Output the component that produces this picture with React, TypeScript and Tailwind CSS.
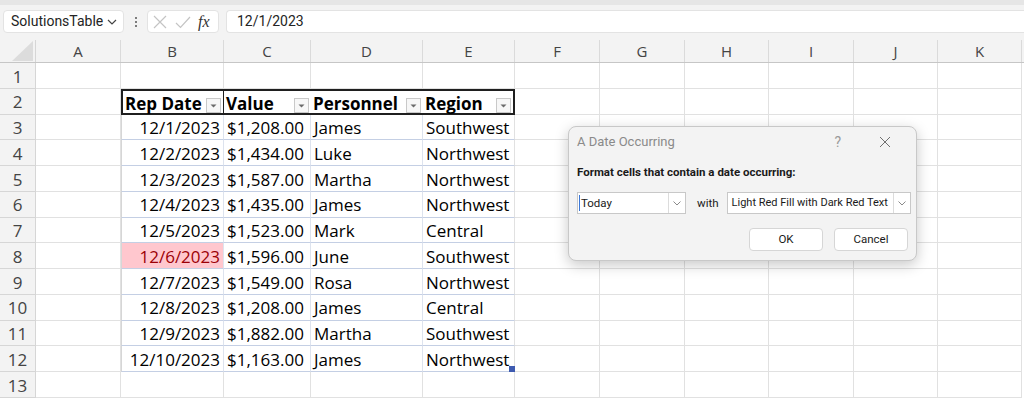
import React from "react";

const cols = [
  { id: "A", w: 85 },
  { id: "B", w: 103 },
  { id: "C", w: 87 },
  { id: "D", w: 112 },
  { id: "E", w: 92 },
  { id: "F", w: 85 },
  { id: "G", w: 85 },
  { id: "H", w: 84 },
  { id: "I", w: 85 },
  { id: "J", w: 84 },
  { id: "K", w: 84 },
];

const rows = [
  ["12/1/2023", "$1,208.00", "James", "Southwest"],
  ["12/2/2023", "$1,434.00", "Luke", "Northwest"],
  ["12/3/2023", "$1,587.00", "Martha", "Northwest"],
  ["12/4/2023", "$1,435.00", "James", "Northwest"],
  ["12/5/2023", "$1,523.00", "Mark", "Central"],
  ["12/6/2023", "$1,596.00", "June", "Southwest"],
  ["12/7/2023", "$1,549.00", "Rosa", "Northwest"],
  ["12/8/2023", "$1,208.00", "James", "Central"],
  ["12/9/2023", "$1,882.00", "Martha", "Southwest"],
  ["12/10/2023", "$1,163.00", "James", "Northwest"],
];

const headers = ["Rep Date", "Value", "Personnel", "Region"];

const cellFont = { fontFamily: '"Open Sans", sans-serif' };

function FilterButton() {
  return (
    <div className="mr-[2px] mt-[4px] flex h-[15px] w-[15px] shrink-0 items-center justify-center border border-[#c9c9c9] bg-[#f7f7f7]">
      <svg width="7" height="4" viewBox="0 0 7 4">
        <path d="M0.5 0.5 L6.5 0.5 L3.5 3.5 Z" fill="#6b6b6b" />
      </svg>
    </div>
  );
}

function Chevron() {
  return (
    <div className="flex h-full w-[17px] shrink-0 items-center justify-center border-l border-[#dcdcdc]">
      <svg width="8" height="5" viewBox="0 0 8 5">
        <path d="M0.5 0.5 L4 4 L7.5 0.5" stroke="#8a8a8a" fill="none" />
      </svg>
    </div>
  );
}

function Dialog() {
  return (
    <div
      className="absolute left-[568px] top-[126px] flex h-[135px] w-[349px] flex-col rounded-[8px] border border-[#c8c8c8] bg-[#f3f3f3] px-[8px] text-[11.5px] text-[#1a1a1a] shadow-[0_4px_14px_rgba(0,0,0,0.22)]"
      style={{ fontFamily: "Roboto, sans-serif" }}
    >
      <div className="flex h-[30px] items-center">
        <span className="text-[13px] text-[#8a8a8a]">A Date Occurring</span>
        <span className="ml-auto mr-[38px] text-[14px] text-[#9a9a9a]">?</span>
        <svg width="12" height="12" viewBox="0 0 12 12" className="mr-[17px]">
          <path d="M1 1 L11 11 M11 1 L1 11" stroke="#6f6f6f" strokeWidth="1" />
        </svg>
      </div>
      <div className="mt-[7px] text-[11.5px] font-bold">Format cells that contain a date occurring:</div>
      <div className="mt-[11px] flex items-center">
        <div className="flex h-[22px] w-[109px] shrink-0 items-center border border-[#c8c8c8] bg-white">
          <div className="ml-[1px] h-[16px] w-[1px] bg-[#3b78d8]" />
          <span className="ml-[1px] flex-1">Today</span>
          <Chevron />
        </div>
        <span className="ml-[11px] mr-[8px]">with</span>
        <div className="flex h-[22px] w-[184px] shrink-0 items-center border border-[#c8c8c8] bg-white">
          <span className="ml-[4px] flex-1 whitespace-nowrap text-[11px]">Light Red Fill with Dark Red Text</span>
          <Chevron />
        </div>
      </div>
      <div className="mt-[14px] flex justify-end gap-[11px]">
        <div className="flex h-[23px] w-[74px] items-center justify-center rounded-[4px] border border-[#d6d6d6] bg-white">
          OK
        </div>
        <div className="flex h-[23px] w-[74px] items-center justify-center rounded-[4px] border border-[#d6d6d6] bg-white">
          Cancel
        </div>
      </div>
    </div>
  );
}

function TopBar() {
  return (
    <div
      className="flex h-[38px] items-center border-t-[5px] border-[#e6e6e6] bg-[#f3f3f3] pl-[3px] text-[14px] text-[#242424]"
      style={{ fontFamily: "Roboto, sans-serif" }}
    >
      <div className="flex h-[23px] w-[121px] shrink-0 items-center rounded-[4px] border border-[#e3e3e3] bg-white pl-[7px]">
        <span>SolutionsTable</span>
        <svg width="10" height="6" viewBox="0 0 10 6" className="ml-auto mr-[6px]">
          <path d="M1 1 L5 5 L9 1" stroke="#444" strokeWidth="1.2" fill="none" />
        </svg>
      </div>
      <div className="ml-[11px] mr-[10px] flex flex-col gap-[2px]">
        <div className="h-[2px] w-[2px] rounded-full bg-[#555]" />
        <div className="h-[2px] w-[2px] rounded-full bg-[#555]" />
        <div className="h-[2px] w-[2px] rounded-full bg-[#555]" />
      </div>
      <div className="flex h-[23px] w-[72px] shrink-0 items-center rounded-[4px] border border-[#e3e3e3] bg-white pl-[5px]">
        <svg width="14" height="14" viewBox="0 0 14 14">
          <path d="M1 1 L13 13 M13 1 L1 13" stroke="#c4c4c4" strokeWidth="1.2" />
        </svg>
        <svg width="16" height="14" viewBox="0 0 16 14" className="ml-[8px]">
          <path d="M1 8 L5.5 12.5 L15 2" stroke="#c4c4c4" strokeWidth="1.2" fill="none" />
        </svg>
        <span
          className="ml-[7px] text-[16px] italic text-[#333]"
          style={{ fontFamily: '"Liberation Serif", serif' }}
        >
          fx
        </span>
      </div>
      <div className="ml-[7px] flex h-[23px] flex-1 items-center rounded-l-[4px] border border-r-0 border-[#e3e3e3] bg-white pl-[10px]">
        12/1/2023
      </div>
    </div>
  );
}

function ColumnHeaders() {
  return (
    <div className="flex h-[25px] border-b border-[#c6c6c6] bg-[#f3f3f3] pt-[2px] text-[15px] text-[#444]" style={cellFont}>
      <div className="relative w-[36px] shrink-0 border-r border-[#d6d6d6]">
        <svg width="22" height="20" viewBox="0 0 22 20" className="absolute bottom-[1px] right-[1px]">
          <path d="M21 0 L21 20 L0 20 Z" fill="#dcdcdc" />
        </svg>
      </div>
      {cols.map((c) => (
        <div
          key={c.id}
          className="flex shrink-0 items-center justify-center border-r border-[#dadada]"
          style={{ width: c.w }}
        >
          {c.id}
        </div>
      ))}
    </div>
  );
}

function Cell({ col, row }: { col: number; row: number }) {
  // col: 0 = A ... ; row: 1-based sheet row
  const w = cols[col].w;
  const inTable = col >= 1 && col <= 4 && row >= 2 && row <= 12;
  const isHeader = inTable && row === 2;
  let cls = "relative flex shrink-0 items-center border-r border-b border-[#e1e1e1] whitespace-nowrap";
  let content: React.ReactNode = null;

  if (isHeader) {
    cls =
      "relative flex shrink-0 items-center justify-between whitespace-nowrap border-t-2 border-b-2 border-[#1f1f1f] font-bold text-black pl-[2px] pt-[4px]";
    if (col === 1) cls += " border-l-2 border-r border-r-[#1f1f1f]";
    if (col === 4) cls += " border-r-2";
    content = (
      <>
        <span>{headers[col - 1]}</span>
        <FilterButton />
      </>
    );
  } else if (inTable) {
    const v = rows[row - 3][col - 1];
    const today = col === 1 && row === 8;
    cls =
      "relative flex shrink-0 items-center whitespace-nowrap border-b border-r border-b-[#c4cfe4] pt-[2px]";
    if (col === 1) cls += " border-l border-l-[#d6d6d6] justify-end pr-[3px]";
    else cls += " pl-[3px]";
    cls += col === 4 ? " border-r-[#e1e1e1]" : " border-r-[#dde3ee]";
    cls += today ? " bg-[#ffc7ce] text-[#9c0006]" : " bg-white text-black";
    content = (
      <>
        {v}
        {col === 4 && row === 12 && (
          <div className="absolute bottom-[-1px] right-[-1px] h-[6px] w-[6px] bg-[#3e5bb0]" />
        )}
      </>
    );
  }

  return (
    <div className={cls} style={{ width: w, height: "100%" }}>
      {content}
    </div>
  );
}

export default function App() {
  return (
    <div className="relative h-[400px] w-[1024px] overflow-hidden bg-white">
      <TopBar />
      <ColumnHeaders />
      <div className="flex flex-col text-[17px]" style={cellFont}>
        {Array.from({ length: 13 }, (_, i) => i + 1).map((r) => (
          <div key={r} className="flex h-[25.75px] shrink-0">
            <div className="flex w-[36px] shrink-0 items-center justify-center border-r border-b border-[#d6d6d6] bg-[#f3f3f3] pt-[2px] text-[#444]">
              {r}
            </div>
            {cols.map((c, ci) => (
              <Cell key={c.id} col={ci} row={r} />
            ))}
          </div>
        ))}
      </div>
      <Dialog />
    </div>
  );
}
